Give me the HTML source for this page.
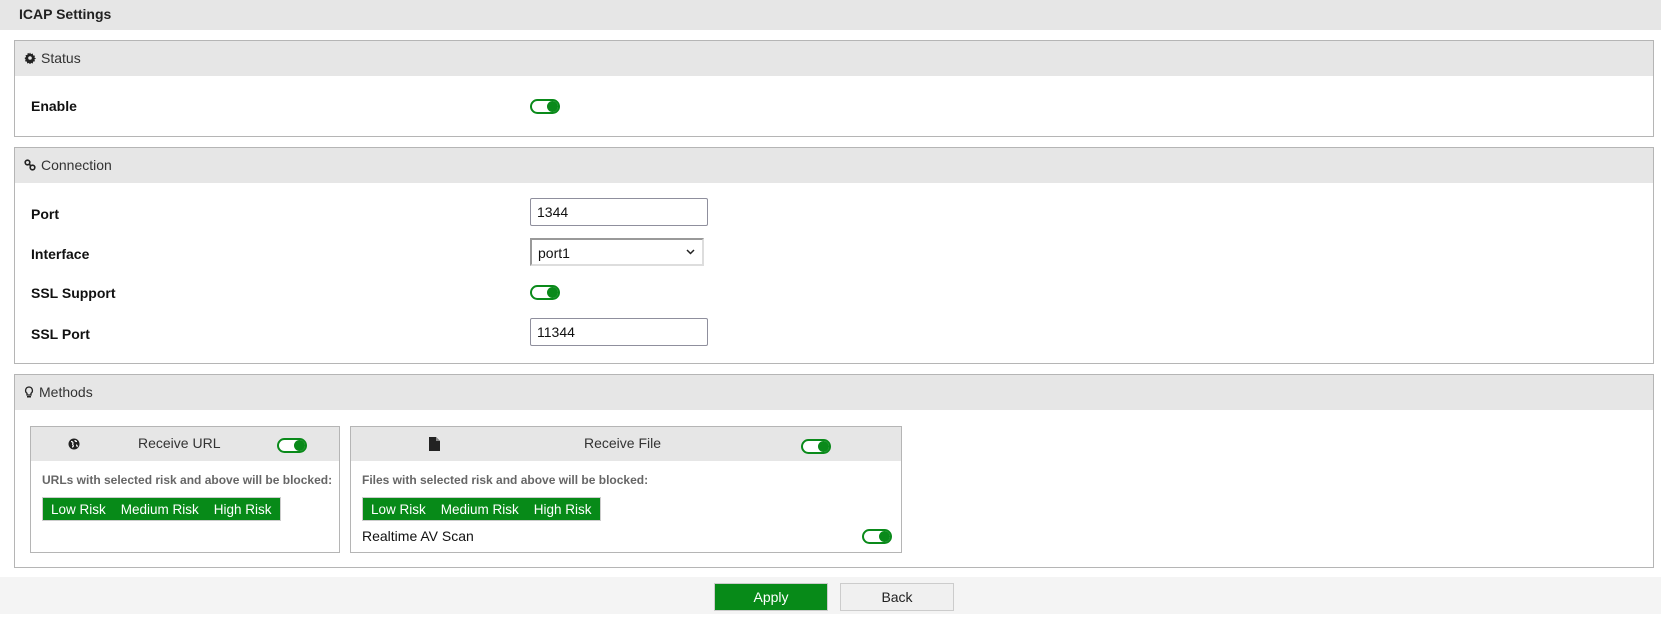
<!DOCTYPE html>
<html><head><meta charset="utf-8"><style>
*{box-sizing:border-box;margin:0;padding:0}
body{width:1661px;height:633px;background:#fff;font-family:"Liberation Sans",sans-serif;font-size:14px;color:#222;position:relative;overflow:hidden}
.abs{position:absolute}
.top{left:0;top:0;width:1661px;height:30px;background:#e6e6e6;font-weight:bold;padding:6px 0 0 19px;font-size:14px;color:#222}
.panel{position:absolute;left:14px;width:1640px;border:1px solid #b5b5b5;background:#fff}
.ph{height:35px;background:#e6e6e6;padding:9px 0 0 9px;font-size:14px;color:#333}
.lbl{position:absolute;left:16px;font-weight:bold;font-size:14px;color:#111}
.tog{position:absolute;width:30px;height:15px;border:2px solid #0a8a1a;border-radius:8px;background:#fff}
.tog:after{content:"";position:absolute;right:0;top:0;width:11px;height:11px;border-radius:50%;background:#0a8a1a}
.inp{position:absolute;left:515px;width:178px;height:28px;border:1px solid #8f8f9d;border-radius:2px;padding:5px 6px;font-size:14px;color:#111}
.card{position:absolute;top:51px;height:127px;border:1px solid #b5b5b5;background:#fff}
.ch{height:34px;background:#e6e6e6;position:relative;font-size:14px;color:#333}
.risk{position:absolute;left:11px;top:70px;height:24px;background:#078a18;border:1px solid #ccc;color:#fff;font-size:13.5px;padding:4px 8px}
.risk span{margin-right:15px}.risk span:last-child{margin-right:0}
.sm{position:absolute;left:11px;top:46px;font-size:12px;color:#666;font-weight:bold}
</style></head><body>
<div class="abs top">ICAP Settings</div>

<div class="panel" style="top:40px;height:97px">
<div class="ph"><svg width="12" height="12" viewBox="0 0 12 12" style="vertical-align:-1px;margin-right:5px"><path d="M6 0.5l1 1.6 1.8-.6.3 1.9 1.9.3-.6 1.8 1.6 1-1.6 1 .6 1.8-1.9.3-.3 1.9-1.8-.6-1 1.6-1-1.6-1.8.6-.3-1.9-1.9-.3.6-1.8L.5 6l1.6-1-.6-1.8 1.9-.3.3-1.9 1.8.6z" fill="#222"/><circle cx="6" cy="6" r="1.8" fill="#e6e6e6"/></svg>Status</div>
<div class="lbl" style="top:57px">Enable</div>
<div class="tog" style="left:515px;top:58px"></div>
</div>

<div class="panel" style="top:147px;height:217px">
<div class="ph"><svg width="12" height="12" viewBox="0 0 12 12" style="vertical-align:-1px;margin-right:5px"><circle cx="3.5" cy="3.5" r="2.3" fill="none" stroke="#222" stroke-width="1.6"/><circle cx="8.5" cy="8.5" r="2.3" fill="none" stroke="#222" stroke-width="1.6"/><path d="M5 5l2 2" stroke="#222" stroke-width="1.6"/></svg>Connection</div>
<div class="lbl" style="top:58px">Port</div>
<div class="inp" style="top:50px">1344</div>
<div class="lbl" style="top:98px">Interface</div>
<div class="inp" style="top:90px;width:174px;border:2px solid #999;border-right-color:#ddd;border-bottom-color:#ddd;border-radius:0">port1<svg class="abs" style="right:7px;top:9px" width="9" height="6" viewBox="0 0 9 6"><path d="M1 1l3.5 3.5L8 1" fill="none" stroke="#222" stroke-width="1.5"/></svg></div>
<div class="lbl" style="top:137px">SSL Support</div>
<div class="tog" style="left:515px;top:137px"></div>
<div class="lbl" style="top:178px">SSL Port</div>
<div class="inp" style="top:170px">11344</div>
</div>

<div class="panel" style="top:374px;height:194px">
<div class="ph"><svg width="10" height="12" viewBox="0 0 10 12" style="vertical-align:-1px;margin-right:5px"><path d="M5 1a3.5 3.5 0 0 0-2 6.3V9h4V7.3A3.5 3.5 0 0 0 5 1z" fill="none" stroke="#222" stroke-width="1.3"/><rect x="3" y="10" width="4" height="1.5" fill="#222"/></svg>Methods</div>
<div class="card" style="left:15px;width:310px">
<div class="ch"><svg class="abs" style="left:37px;top:11px" width="12" height="12" viewBox="0 0 12 12"><circle cx="6" cy="6" r="5.5" fill="#222"/><path d="M3 3.5c1 0 2 .5 2 1.5s-1 1 0 2 0 2-1 2M7 2c0 1 1 1.5 2 1.5M8 7c1 0 1.5 1 1 2" stroke="#fff" stroke-width="1.2" fill="none"/></svg><span class="abs" style="left:107px;top:8px">Receive URL</span><div class="tog" style="left:246px;top:11px"></div></div>
<div class="sm">URLs with selected risk and above will be blocked:</div>
<div class="risk"><span>Low Risk</span><span>Medium Risk</span><span>High Risk</span></div>
</div>
<div class="card" style="left:335px;width:552px">
<div class="ch"><svg class="abs" style="left:78px;top:10px" width="11" height="14" viewBox="0 0 11 14"><path d="M0 0h7l4 4v10H0z" fill="#222"/><path d="M7 0v4h4" fill="#888"/></svg><span class="abs" style="left:233px;top:8px">Receive File</span><div class="tog" style="left:450px;top:12px"></div></div>
<div class="sm">Files with selected risk and above will be blocked:</div>
<div class="risk"><span>Low Risk</span><span>Medium Risk</span><span>High Risk</span></div>
<div class="abs" style="left:11px;top:101px;font-size:14px;color:#111">Realtime AV Scan</div>
<div class="tog" style="left:511px;top:102px"></div>
</div>
</div>

<div class="abs" style="left:0;top:577px;width:1661px;height:37px;background:#f4f4f4"></div>
<div class="abs" style="left:714px;top:583px;width:114px;height:28px;background:#078a18;border:1px solid #ccc;color:#fff;text-align:center;padding-top:5px;font-size:14px">Apply</div>
<div class="abs" style="left:840px;top:583px;width:114px;height:28px;background:#f0f0f0;border:1px solid #ccc;color:#222;text-align:center;padding-top:5px;font-size:14px">Back</div>
</body></html>
